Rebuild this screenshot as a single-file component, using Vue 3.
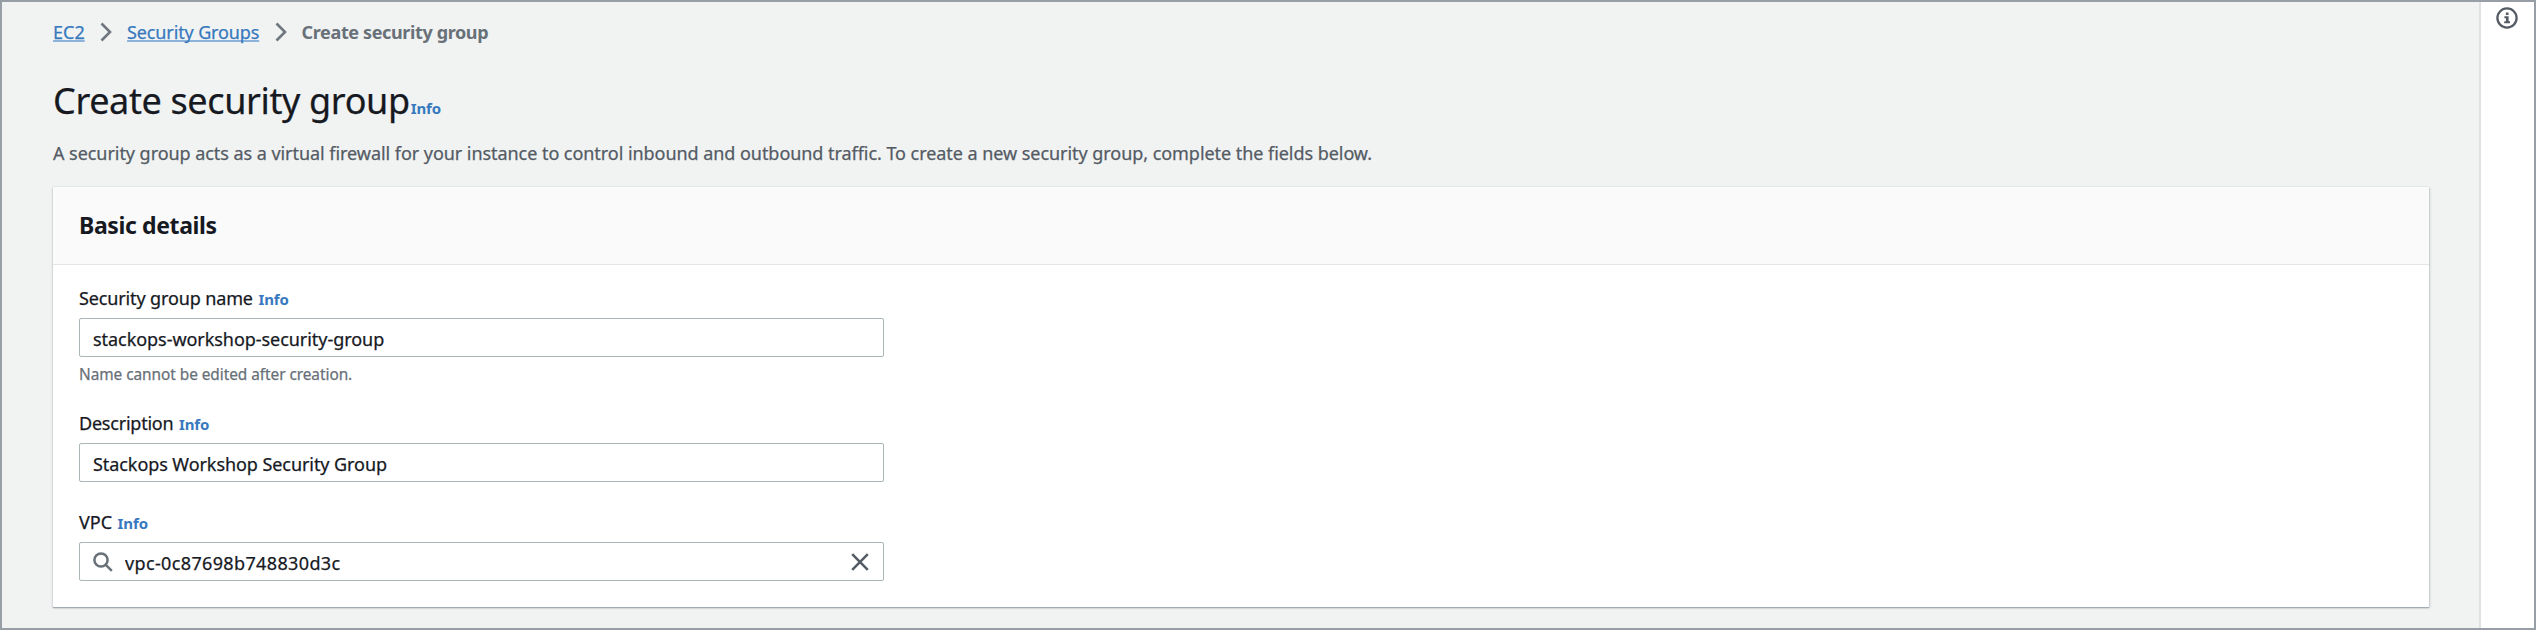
<script setup>
import { ref } from 'vue'

const groupName = ref('stackops-workshop-security-group')
const description = ref('Stackops Workshop Security Group')
const vpc = ref('vpc-0c87698b748830d3c')
</script>

<template>
  <div class="page">
    <main class="content">
      <!-- Breadcrumbs -->
      <nav class="breadcrumbs">
        <a href="#" class="ec2">EC2</a>
        <svg class="chevron" width="12" height="20" viewBox="0 0 12 20">
          <path d="M1.5 1.5 L10 10 L1.5 18.5" />
        </svg>
        <a href="#" class="groups">Security Groups</a>
        <svg class="chevron" width="12" height="20" viewBox="0 0 12 20">
          <path d="M1.5 1.5 L10 10 L1.5 18.5" />
        </svg>
        <span class="current">Create security group</span>
      </nav>

      <div class="title">
        <h1>Create security group</h1>
        <a class="info">Info</a>
      </div>
      <p class="intro">A security group acts as a virtual firewall for your instance to control inbound and outbound traffic. To create a new security group, complete the fields below.</p>

      <!-- Basic details -->
      <section class="card">
        <header>
          <h2>Basic details</h2>
        </header>
        <div class="fields">
          <div class="field">
            <div class="label"><label class="name-label" for="name">Security group name</label><a class="info">Info</a></div>
            <div class="box"><input id="name" v-model="groupName" class="name" type="text" /></div>
            <div class="hint">Name cannot be edited after creation.</div>
          </div>

          <div class="field">
            <div class="label"><label class="desc-label" for="description">Description</label><a class="info">Info</a></div>
            <div class="box"><input id="description" v-model="description" class="desc" type="text" /></div>
          </div>

          <div class="field">
            <div class="label"><label for="vpc">VPC</label><a class="info">Info</a></div>
            <div class="box">
              <svg class="search" width="20" height="20" viewBox="0 0 20 20">
                <circle cx="8" cy="8" r="6.6" />
                <path d="M12.8 12.8 L18.8 18.8" />
              </svg>
              <input id="vpc" v-model="vpc" class="vpc" type="text" />
              <svg class="clear" width="18" height="18" viewBox="0 0 18 18" @click="vpc = ''">
                <path d="M1.2 1.2 L16.8 16.8 M16.8 1.2 L1.2 16.8" />
              </svg>
            </div>
          </div>
        </div>
      </section>
    </main>

    <!-- Collapsed help panel -->
    <aside class="tools">
      <svg width="22" height="22" viewBox="0 0 22 22">
        <circle cx="11" cy="11" r="9.6" fill="none" stroke="#545b64" stroke-width="2.3" />
        <path d="M9.9 5.6h2.6v2.3H9.9z M8.4 9.2h4.2v5h1.4v2.1H8.2v-2.1h1.8v-2.9H8.4z" fill="#545b64" />
      </svg>
    </aside>
  </div>
</template>

<style>
body {
  margin: 0;
}
</style>

<style scoped>
.page {
  display: flex;
  box-sizing: border-box;
  height: 630px;
  border: 2px solid #979ea5;
  background: #f1f3f3;
  color: #16191f;
  font: 18px/30px "Noto Sans", "Open Sans", sans-serif;
  -webkit-text-stroke: 0.25px currentColor;
}

.content {
  flex: 1;
  padding: 15px 50px 0 51px;
}

.breadcrumbs {
  display: flex;
  align-items: center;
  height: 30px;
}

.breadcrumbs a {
  color: #3779be;
  text-decoration: underline;
  text-decoration-thickness: 2px;
  text-decoration-color: #8db3da;
  text-underline-offset: 1px;
  text-decoration-skip-ink: none;
}

.groups {
  letter-spacing: -0.13px;
}

.chevron {
  margin: 0 14.7px 0 15.7px;
  fill: none;
  stroke: #6f767e;
  stroke-width: 2.6;
}

.current {
  color: #687078;
  font-weight: 700;
  letter-spacing: -0.37px;
  -webkit-text-stroke: 0;
}

.title {
  display: flex;
  align-items: baseline;
  margin-top: 30px;
  height: 48px;
}

h1 {
  margin: 0;
  font-size: 36px;
  font-weight: 400;
  line-height: 48px;
  letter-spacing: -0.37px;
}

.info {
  color: #3779be;
  font-size: 15px;
  font-weight: 700;
  letter-spacing: -0.1px;
  -webkit-text-stroke: 0;
}

.title .info {
  margin-left: 1px;
}

.intro {
  margin: 13px 0 0;
  color: #545b64;
  letter-spacing: -0.05px;
  white-space: nowrap;
}

.card {
  margin-top: 19px;
  background: #fff;
  box-shadow: 0 1px 1px #a3abb3, 1px 1px 2px #c9cecf, -1px 1px 2px #dcdfdf, 0 -1px 1px #e9ebeb;
}

.card header {
  box-sizing: border-box;
  height: 78px;
  padding: 22px 26px 0;
  border-bottom: 1px solid #e4e6e6;
  background: #fafafa;
}

h2 {
  margin: 0;
  font-size: 23px;
  line-height: 32px;
  letter-spacing: -0.38px;
  -webkit-text-stroke: 0;
}

.fields {
  display: flex;
  flex-direction: column;
  padding: 18px 26px 26px;
}

.field {
  width: 805px;
}

.field:nth-child(2) {
  margin-top: 21px;
}

.field:nth-child(3) {
  margin-top: 25px;
}

.label {
  display: flex;
  align-items: baseline;
  gap: 5.5px;
  height: 30px;
}

.name-label {
  letter-spacing: -0.13px;
}

.desc-label {
  letter-spacing: -0.22px;
}

.box {
  display: flex;
  align-items: center;
  box-sizing: border-box;
  height: 39px;
  margin-top: 5px;
  padding: 0 14px 0 13px;
  border: 1px solid #aab7b8;
  border-radius: 2px;
  background: #fff;
}

input {
  flex: 1;
  min-width: 0;
  height: 30px;
  padding: 2px 0 0;
  border: 0;
  outline: 0;
  background: transparent;
  color: #16191f;
  font: inherit;
  -webkit-text-stroke: inherit;
}

.name {
  letter-spacing: -0.05px;
}

.desc {
  letter-spacing: -0.07px;
}

.vpc {
  letter-spacing: 0.36px;
}

.search {
  margin-right: 12px;
  fill: none;
  stroke: #687078;
  stroke-width: 2.5;
}

.clear {
  fill: none;
  stroke: #545b64;
  stroke-width: 2.5;
}

.hint {
  margin-top: 6px;
  color: #687078;
  font-size: 15.4px;
  line-height: 24px;
  letter-spacing: -0.05px;
}

.tools {
  box-sizing: border-box;
  width: 55px;
  padding: 5px 0 0 15px;
  border-left: 2px solid #dfe2e2;
  background: #fff;
}

.tools svg {
  display: block;
}
</style>
